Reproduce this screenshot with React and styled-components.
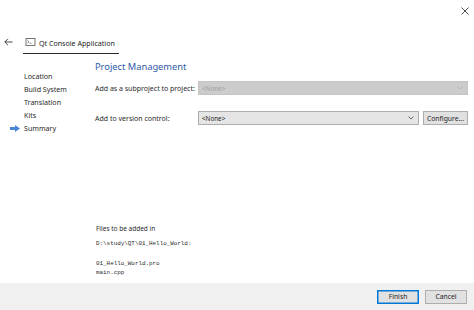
import React from 'react';
import styled, { createGlobalStyle } from 'styled-components';

const GlobalStyle = createGlobalStyle`
  html, body {
    margin: 0;
    padding: 0;
    background: #ffffff;
  }
  body {
    font-family: "Segoe UI", "Noto Sans", "Liberation Sans", sans-serif;
    color: #1e1e1e;
  }
`;

const Window = styled.div`
  width: 474px;
  height: 310px;
  display: flex;
  flex-direction: column;
  background: #ffffff;
  overflow: hidden;
`;

const TitleBar = styled.div`
  height: 17px;
  display: flex;
  justify-content: flex-end;
  align-items: center;
  padding-right: 4px;
  padding-top: 2px;
`;

const CloseButton = styled.button`
  border: none;
  background: none;
  padding: 0;
  width: 10px;
  height: 10px;
  display: flex;
  align-items: center;
  justify-content: center;
`;

const Header = styled.div`
  display: flex;
  align-items: flex-end;
  height: 35px;
  padding-left: 4px;
  gap: 9px;
`;

const BackButton = styled.button`
  border: none;
  background: none;
  padding: 0;
  width: 10px;
  height: 10px;
  display: flex;
  align-items: center;
  margin-bottom: 7px;
`;

const Tab = styled.div`
  display: flex;
  align-items: center;
  gap: 3px;
  height: 18px;
  padding: 0 4px 0 2px;
  border-bottom: 1px solid #2a2a2a;
  font-size: 7.1px;
  color: #222;
`;

const TabLabel = styled.span`
  padding-bottom: 3px;
`;

const TabIcon = styled.svg`
  margin-bottom: 3px;
`;

const Body = styled.div`
  flex: 1;
  display: grid;
  grid-template-columns: 95px 1fr;
`;

const Sidebar = styled.ul`
  list-style: none;
  margin: 0;
  padding: 16px 0 0 0;
  display: flex;
  flex-direction: column;
`;

const NavItem = styled.li`
  position: relative;
  height: 13px;
  line-height: 13px;
  padding-left: 24px;
  font-size: 7.1px;
  color: #2a2a2a;
`;

const NavArrow = styled.svg`
  position: absolute;
  left: 10px;
  top: 3px;
`;

const Content = styled.div`
  display: flex;
  flex-direction: column;
  padding-right: 6px;
`;

const Heading = styled.h1`
  margin: 0;
  margin-top: 6px;
  height: 14px;
  line-height: 14px;
  font-size: 9.3px;
  font-weight: 400;
  color: #2f5ba7;
`;

const FormRow = styled.div`
  display: grid;
  grid-template-columns: 99px 1fr auto;
  align-items: center;
  column-gap: 4px;
  height: 14px;
  margin-top: ${(p) => p.$top || 0}px;
`;

const Label = styled.span`
  font-size: 7px;
  color: #2a2a2a;
  white-space: nowrap;
`;

const Combo = styled.div`
  grid-column: ${(p) => (p.$wide ? '2 / 4' : '2 / 3')};
  height: 14px;
  box-sizing: border-box;
  display: flex;
  align-items: center;
  justify-content: space-between;
  padding: 0 4px 0 3px;
  font-size: 6.3px;
  background: ${(p) => (p.$disabled ? '#cccccc' : '#e5e5e5')};
  border: 1px solid ${(p) => (p.$disabled ? '#c4c4c4' : '#adadad')};
  color: ${(p) => (p.$disabled ? '#9c9c9c' : '#1e1e1e')};
`;

const Button = styled.button`
  box-sizing: border-box;
  height: 14px;
  padding: 0 3px;
  min-width: ${(p) => p.$min || 0}px;
  font-family: inherit;
  font-size: 6.8px;
  color: #1e1e1e;
  background: #e1e1e1;
  border: 1px solid ${(p) => (p.$primary ? '#0078d7' : '#adadad')};
  box-shadow: ${(p) => (p.$primary ? 'inset 0 0 0 0.5px #0078d7' : 'none')};
`;

const Files = styled.div`
  margin-top: 99px;
  display: flex;
  flex-direction: column;
  padding-left: 1px;
`;

const FilesTitle = styled.div`
  font-size: 6.5px;
  line-height: 10px;
  color: #2a2a2a;
`;

const Mono = styled.pre`
  margin: ${(p) => p.$top || 0}px 0 0 0;
  font-family: "Liberation Mono", "DejaVu Sans Mono", monospace;
  font-size: 5.9px;
  line-height: 9.5px;
  color: #2a2a2a;
`;

const Footer = styled.div`
  height: 27px;
  background: #f0f0f0;
  display: flex;
  justify-content: flex-end;
  align-items: center;
  gap: 6px;
  padding-right: 7px;
`;

const ChevronDown = ({ color }) => (
  <svg width="6" height="4" viewBox="0 0 6 4">
    <path d="M0.5 0.5 L3 3 L5.5 0.5" fill="none" stroke={color} strokeWidth="0.8" />
  </svg>
);

export default function App() {
  return (
    <>
      <GlobalStyle />
      <Window>
        <TitleBar>
          <CloseButton aria-label="Close">
            <svg width="8" height="8" viewBox="0 0 8 8">
              <path d="M0.5 0.5 L7.5 7.5 M7.5 0.5 L0.5 7.5" stroke="#3a3a3a" strokeWidth="0.9" />
            </svg>
          </CloseButton>
        </TitleBar>

        <Header>
          <BackButton aria-label="Back">
            <svg width="9" height="8" viewBox="0 0 9 8">
              <path d="M0.8 4 H8.5 M4 0.8 L0.8 4 L4 7.2" fill="none" stroke="#333" strokeWidth="0.9" />
            </svg>
          </BackButton>
          <Tab>
            <TabIcon width="11" height="9" viewBox="0 0 11 9">
              <rect x="1" y="0.5" width="9" height="7" fill="none" stroke="#555" strokeWidth="0.8" />
              <path d="M2.5 2.5 L4 3.8 L2.5 5" fill="none" stroke="#555" strokeWidth="0.7" />
              <path d="M4.5 5.2 H6.5" stroke="#555" strokeWidth="0.7" />
            </TabIcon>
            <TabLabel>Qt Console Application</TabLabel>
          </Tab>
        </Header>

        <Body>
          <Sidebar>
            <NavItem>Location</NavItem>
            <NavItem>Build System</NavItem>
            <NavItem>Translation</NavItem>
            <NavItem>Kits</NavItem>
            <NavItem>
              <NavArrow width="10" height="7" viewBox="0 0 10 7">
                <path d="M0 2 H5 V0 L10 3.5 L5 7 V5 H0 Z" fill="#4a86d8" />
              </NavArrow>
              Summary
            </NavItem>
          </Sidebar>

          <Content>
            <Heading>Project Management</Heading>
            <FormRow $top={7}>
              <Label>Add as a subproject to project:</Label>
              <Combo $disabled $wide>
                &lt;None&gt;
                <ChevronDown color="#b0b0b0" />
              </Combo>
            </FormRow>
            <FormRow $top={16}>
              <Label>Add to version control:</Label>
              <Combo>
                &lt;None&gt;
                <ChevronDown color="#444" />
              </Combo>
              <Button>Configure...</Button>
            </FormRow>

            <Files>
              <FilesTitle>Files to be added in</FilesTitle>
              <Mono $top={5}>D:\study\QT\01_Hello_World:</Mono>
              <Mono $top={10}>{'01_Hello_World.pro\nmain.cpp'}</Mono>
            </Files>
          </Content>
        </Body>

        <Footer>
          <Button $primary $min={42}>Finish</Button>
          <Button $min={42}>Cancel</Button>
        </Footer>
      </Window>
    </>
  );
}
